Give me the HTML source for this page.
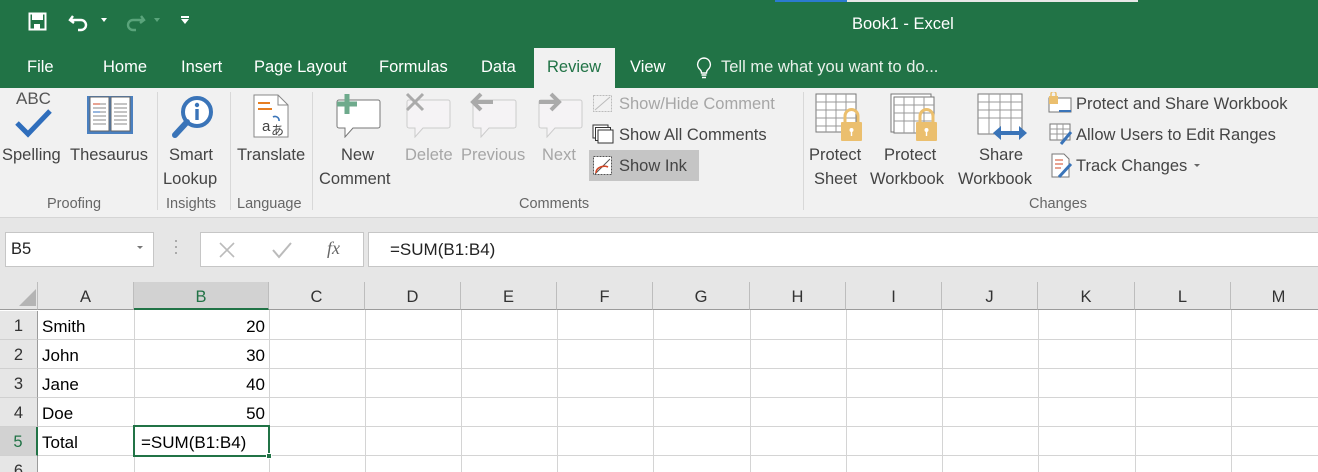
<!DOCTYPE html>
<html><head><meta charset="utf-8"><style>
*{margin:0;padding:0;box-sizing:border-box}
html{width:1318px;height:472px;overflow:hidden}
body{width:1318px;height:472px;overflow:hidden;background:#fff;font-family:"Liberation Sans",sans-serif;position:relative;color:#262626}
.a{position:absolute;white-space:nowrap}
.tb{background:#217346;position:absolute;left:0;top:0;width:1318px;height:88px}
.tab{position:absolute;top:58px;color:#fff;font-size:16.5px}
.rib{position:absolute;left:0;top:88px;width:1318px;height:130px;background:#f1f1f1;border-bottom:1px solid #d5d5d5}
.lbl{font-size:16.5px;color:#444;text-align:center;line-height:24px}
.dis{color:#a6a6a6}
.grp{font-size:14.5px;color:#666;position:absolute;top:196px}
.sep{position:absolute;top:92px;width:1px;height:118px;background:#d8d8d8}
.fb{position:absolute;left:0;top:218px;width:1318px;height:64px;background:#e6e6e6}
.hdr{position:absolute;top:282px;height:28px;background:#e6e6e6;border-right:1px solid #bdbdbd;border-bottom:1px solid #9b9b9b;font-size:16.5px;text-align:center;line-height:31px;color:#333}
.rh{position:absolute;left:0;width:38px;height:29px;background:#e6e6e6;border-bottom:1px solid #d0d0d0;border-right:1px solid #9b9b9b;font-size:16.5px;text-align:center;line-height:31px;color:#333;overflow:hidden}
.cell{position:absolute;font-size:17px;color:#000;line-height:31px}
</style></head><body>
<div class="tb"></div>
<div class="a" style="left:775px;top:0;width:72px;height:2px;background:#2b7bd0"></div>
<div class="a" style="left:847px;top:0;width:291px;height:2px;background:#e8e8e8"></div>
<svg class="a" style="left:28px;top:12px" width="20" height="20"><rect x="1.5" y="1.5" width="16" height="16" fill="none" stroke="#fff" stroke-width="2"/><rect x="4" y="2" width="11" height="6" fill="#fff"/><rect x="6" y="12" width="6" height="5" fill="#fff"/></svg>
<svg class="a" style="left:68px;top:10px" width="24" height="24"><path d="M5 6 L2 10 L6 13 M2.5 10 H13 a5 5 0 0 1 0 10 H10" fill="none" stroke="#fff" stroke-width="2.4"/></svg>
<div class="a" style="left:101px;top:18px;border:3.5px solid transparent;border-top:4px solid #fff"></div>
<svg class="a" style="left:122px;top:10px" width="24" height="24"><path d="M19 6 L22 10 L18 13 M21.5 10 H11 a5 5 0 0 0 0 10 H14" fill="none" stroke="#5aa47b" stroke-width="2.4"/></svg>
<div class="a" style="left:154px;top:18px;border:3.5px solid transparent;border-top:4px solid #5aa47b"></div>
<div class="a" style="left:181px;top:16px;width:8px;height:1.5px;background:#fff"></div>
<div class="a" style="left:181px;top:19px;border:4px solid transparent;border-top:5px solid #fff"></div>
<div class="a" style="left:852px;top:15px;color:#fff;font-size:16.5px">Book1 - Excel</div>
<div class="tab" style="left:27px">File</div>
<div class="tab" style="left:103px">Home</div>
<div class="tab" style="left:181px">Insert</div>
<div class="tab" style="left:254px">Page Layout</div>
<div class="tab" style="left:379px">Formulas</div>
<div class="tab" style="left:481px">Data</div>
<div class="a" style="left:534px;top:48px;width:81px;height:41px;background:#f1f1f1"></div>
<div class="tab" style="left:547px;color:#217346">Review</div>
<div class="tab" style="left:630px">View</div>
<svg class="a" style="left:694px;top:56px" width="20" height="24"><path d="M10 2a6.5 6.5 0 0 0-4 11.5c1 1 1.5 2 1.5 3.5h5c0-1.5.5-2.5 1.5-3.5A6.5 6.5 0 0 0 10 2z" fill="none" stroke="#fff" stroke-width="1.4"/><path d="M7.5 19h5M8 21.5h4" stroke="#fff" stroke-width="1.4"/></svg>
<div class="tab" style="left:721px;color:#e8f0ea">Tell me what you want to do...</div>

<div class="rib"></div>
<div class="a" style="left:16px;top:89px;font-size:17px;color:#555">ABC</div>
<svg class="a" style="left:14px;top:108px" width="40" height="30"><path d="M3 15 L14 26 L36 3" fill="none" stroke="#2f6ebc" stroke-width="5"/></svg>
<svg class="a" style="left:86px;top:94px" width="48" height="42"><rect x="1" y="2" width="46" height="38" fill="#4a80c0"/><rect x="4" y="3" width="19" height="34" fill="#fff" stroke="#666"/><rect x="25" y="3" width="19" height="34" fill="#fff" stroke="#666"/><g stroke="#888"><path d="M7 10h13M7 14h13M7 18h13M7 22h13M7 26h13M7 30h13M28 10h13M28 14h13M28 18h13M28 22h13M28 26h13M28 30h13"/></g><path d="M7 10h7" stroke="#d24726"/><path d="M7 18h7" stroke="#2f6ebc"/></svg>
<div class="a lbl" style="left:2px;top:143px">Spelling</div>
<div class="a lbl" style="left:70px;top:143px">Thesaurus</div>
<div class="sep" style="left:157px"></div>
<svg class="a" style="left:170px;top:94px" width="46" height="46"><circle cx="27" cy="18" r="14" fill="#fff" stroke="#3a74b8" stroke-width="4"/><circle cx="27" cy="11" r="2.2" fill="#3a74b8"/><rect x="25.3" y="15" width="3.4" height="11" fill="#3a74b8"/><path d="M17 28 L5 41" stroke="#3a74b8" stroke-width="6" stroke-linecap="round"/></svg>
<div class="a lbl" style="left:169px;top:143px">Smart</div>
<div class="a lbl" style="left:163px;top:167px">Lookup</div>
<div class="sep" style="left:230px"></div>
<svg class="a" style="left:252px;top:93px" width="42" height="46"><path d="M2 2h24l10 10v32H2z" fill="#fff" stroke="#888"/><path d="M26 2v10h10" fill="none" stroke="#888"/><path d="M6 10h12M6 16h14" stroke="#e67e22" stroke-width="2"/><text x="10" y="38" font-size="15" font-family="Liberation Sans,Noto Sans CJK JP,sans-serif" fill="#444">a</text><text x="19" y="42" font-size="13" font-family="Noto Sans CJK JP,sans-serif" fill="#444">あ</text><path d="M21 24 a4 4 0 0 1 6 4" fill="none" stroke="#3a74b8" stroke-width="1.6"/></svg>
<div class="a lbl" style="left:237px;top:143px">Translate</div>
<div class="sep" style="left:312px"></div>
<svg class="a" style="left:334px;top:92px" width="50" height="46"><path d="M5 8h39a2 2 0 0 1 2 2v24a2 2 0 0 1-2 2H19l-8 9v-9H5a2 2 0 0 1-2-2V10a2 2 0 0 1 2-2z" fill="#fff" stroke="#777"/><path d="M13 2v20M3 12h20" stroke="#6eaa8c" stroke-width="5"/></svg>
<div class="a lbl" style="left:341px;top:143px">New</div>
<div class="a lbl" style="left:319px;top:167px">Comment</div>
<svg class="a" style="left:404px;top:92px" width="50" height="46"><path d="M5 8h39a2 2 0 0 1 2 2v24a2 2 0 0 1-2 2H19l-8 9v-9H5a2 2 0 0 1-2-2V10a2 2 0 0 1 2-2z" fill="#f5f3f5" stroke="#ccc"/><path d="M3 2l16 16M19 2L3 18" stroke="#aaa" stroke-width="3"/></svg>
<div class="a lbl dis" style="left:405px;top:143px">Delete</div>
<svg class="a" style="left:470px;top:92px" width="50" height="46"><path d="M5 8h39a2 2 0 0 1 2 2v24a2 2 0 0 1-2 2H19l-8 9v-9H5a2 2 0 0 1-2-2V10a2 2 0 0 1 2-2z" fill="#f5f3f5" stroke="#ccc"/><path d="M3 10h20M11 2L3 10l8 8" fill="none" stroke="#aaa" stroke-width="4"/></svg>
<div class="a lbl dis" style="left:461px;top:143px">Previous</div>
<svg class="a" style="left:536px;top:92px" width="50" height="46"><path d="M5 8h39a2 2 0 0 1 2 2v24a2 2 0 0 1-2 2H19l-8 9v-9H5a2 2 0 0 1-2-2V10a2 2 0 0 1 2-2z" fill="#f5f3f5" stroke="#ccc"/><path d="M3 10h20M15 2l8 8-8 8" fill="none" stroke="#aaa" stroke-width="4"/></svg>
<div class="a lbl dis" style="left:542px;top:143px">Next</div>
<svg class="a" style="left:592px;top:94px" width="22" height="20"><rect x="1.5" y="1.5" width="18" height="16" fill="none" stroke="#bbb" stroke-dasharray="2 1"/><path d="M3 16L18 3" stroke="#bbb"/></svg>
<div class="a lbl dis" style="left:619px;top:92px">Show/Hide Comment</div>
<svg class="a" style="left:592px;top:124px" width="22" height="20"><rect x="1" y="1" width="15" height="13" fill="#fff" stroke="#333"/><rect x="3.5" y="3.5" width="15" height="13" fill="#fff" stroke="#333"/><rect x="6" y="6" width="15" height="13" fill="#fff" stroke="#333"/></svg>
<div class="a lbl" style="left:619px;top:123px">Show All Comments</div>
<div class="a" style="left:589px;top:150px;width:110px;height:31px;background:#c5c5c5"></div>
<svg class="a" style="left:592px;top:155px" width="22" height="22"><rect x="1.5" y="1.5" width="18" height="18" fill="#fff" stroke="#555" stroke-dasharray="2 1"/><path d="M3 19L18 4" stroke="#555"/><path d="M4 18c0-6 8-8 12-6" fill="none" stroke="#d24726" stroke-width="1.6"/></svg>
<div class="a lbl" style="left:619px;top:154px">Show Ink</div>
<div class="grp" style="left:47px">Proofing</div>
<div class="grp" style="left:166px">Insights</div>
<div class="grp" style="left:237px">Language</div>
<div class="grp" style="left:519px">Comments</div>
<div class="sep" style="left:803px"></div>
<svg class="a" style="left:815px;top:93px" width="50" height="50"><rect x="1" y="1" width="40" height="38" fill="#fff" stroke="#777"/><g stroke="#999"><path d="M1 9h40M1 17h40M1 25h40M1 33h40M11 1v38M21 1v38M31 1v38"/></g><rect x="26" y="29" width="21" height="19" rx="1" fill="#ebbf6e"/><path d="M30 29v-6a6.5 6.5 0 0 1 13 0v6" fill="none" stroke="#ebbf6e" stroke-width="3"/><circle cx="36.5" cy="37" r="2" fill="#fff"/><rect x="35.8" y="37" width="1.4" height="6" fill="#fff"/></svg>
<div class="a lbl" style="left:809px;top:143px">Protect</div>
<div class="a lbl" style="left:814px;top:167px">Sheet</div>
<svg class="a" style="left:890px;top:93px" width="50" height="50"><rect x="1" y="1" width="40" height="38" fill="#fff" stroke="#777"/><rect x="4" y="4" width="40" height="36" fill="#fff" stroke="#777"/><g stroke="#999"><path d="M4 12h40M4 20h40M4 28h40M14 4v36M24 4v36M34 4v36"/></g><rect x="26" y="29" width="21" height="19" rx="1" fill="#ebbf6e"/><path d="M30 29v-6a6.5 6.5 0 0 1 13 0v6" fill="none" stroke="#ebbf6e" stroke-width="3"/><circle cx="36.5" cy="37" r="2" fill="#fff"/><rect x="35.8" y="37" width="1.4" height="6" fill="#fff"/></svg>
<div class="a lbl" style="left:884px;top:143px">Protect</div>
<div class="a lbl" style="left:870px;top:167px">Workbook</div>
<svg class="a" style="left:977px;top:93px" width="52" height="50"><rect x="1" y="1" width="44" height="40" fill="#fff" stroke="#777"/><g stroke="#999"><path d="M1 9h44M1 17h44M1 25h44M12 1v40M23 1v40M34 1v40"/></g><path d="M22 40h22" stroke="#3a74b8" stroke-width="4"/><path d="M16 40l8-7v14zM50 40l-8-7v14z" fill="#3a74b8"/></svg>
<div class="a lbl" style="left:979px;top:143px">Share</div>
<div class="a lbl" style="left:958px;top:167px">Workbook</div>
<svg class="a" style="left:1048px;top:92px" width="26" height="24"><rect x="1" y="6" width="22" height="14" fill="#fff" stroke="#777"/><rect x="1" y="4" width="9" height="8" fill="#ebbf6e"/><path d="M3 4v-2a2.5 2.5 0 0 1 5 0v2" fill="none" stroke="#ebbf6e" stroke-width="1.5"/><path d="M11 19h12" stroke="#3a74b8" stroke-width="2"/></svg>
<div class="a lbl" style="left:1076px;top:92px">Protect and Share Workbook</div>
<svg class="a" style="left:1049px;top:122px" width="26" height="24"><rect x="1" y="2" width="20" height="16" fill="#fff" stroke="#777"/><path d="M1 7h20M1 12h20M8 2v16M14 2v16" stroke="#999"/><path d="M12 22l10-12" stroke="#3a74b8" stroke-width="3"/></svg>
<div class="a lbl" style="left:1076px;top:123px">Allow Users to Edit Ranges</div>
<svg class="a" style="left:1050px;top:153px" width="26" height="26"><path d="M2 1h12l5 5v18H2z" fill="#fff" stroke="#777"/><path d="M5 7h8M5 11h8M5 15h6" stroke="#d24726"/><path d="M9 24l12-13" stroke="#3a74b8" stroke-width="3"/></svg>
<div class="a lbl" style="left:1076px;top:154px">Track Changes</div>
<div class="a" style="left:1194px;top:164px;border:3px solid transparent;border-top:3.5px solid #666"></div>
<div class="grp" style="left:1029px">Changes</div>

<div class="fb"></div>
<div class="a" style="left:5px;top:232px;width:149px;height:35px;background:#fff;border:1px solid #c6c6c6"></div>
<div class="a" style="left:11px;top:240px;font-size:16.5px;color:#222">B5</div>
<div class="a" style="left:137px;top:246px;border:3px solid transparent;border-top:3.5px solid #777"></div>
<div class="a" style="left:175px;top:240px;width:2px;height:2px;background:#aaa;box-shadow:0 6px #aaa,0 12px #aaa"></div>
<div class="a" style="left:200px;top:232px;width:164px;height:35px;background:#fff;border:1px solid #c6c6c6"></div>
<svg class="a" style="left:218px;top:241px" width="18" height="18"><path d="M2 2l14 14M16 2L2 16" stroke="#bbb" stroke-width="1.6"/></svg>
<svg class="a" style="left:271px;top:241px" width="22" height="18"><path d="M2 9l6 7L20 2" fill="none" stroke="#bbb" stroke-width="2"/></svg>
<div class="a" style="left:327px;top:238px;font:italic 18px 'Liberation Serif',serif;color:#666">fx</div>
<div class="a" style="left:368px;top:232px;width:952px;height:35px;background:#fff;border:1px solid #c6c6c6"></div>
<div class="a" style="left:390px;top:240px;font-size:17px;color:#222">=SUM(B1:B4)</div>

<div class="a" style="left:0;top:282px;width:38px;height:28px;background:#e6e6e6;border-right:1px solid #bdbdbd;border-bottom:1px solid #9b9b9b"></div>
<div class="a" style="left:19px;top:289px;border-style:solid;border-width:0 0 17px 17px;border-color:transparent transparent #b4b4b4 transparent"></div>
<div class="hdr" style="left:38px;width:96px">A</div>
<div class="hdr" style="left:134px;width:135px;background:#d2d2d2;border-bottom:2px solid #217346;color:#217346">B</div>
<div class="hdr" style="left:269px;width:96px">C</div>
<div class="hdr" style="left:365px;width:96px">D</div>
<div class="hdr" style="left:461px;width:96px">E</div>
<div class="hdr" style="left:557px;width:96px">F</div>
<div class="hdr" style="left:653px;width:97px">G</div>
<div class="hdr" style="left:750px;width:96px">H</div>
<div class="hdr" style="left:846px;width:96px">I</div>
<div class="hdr" style="left:942px;width:96px">J</div>
<div class="hdr" style="left:1038px;width:97px">K</div>
<div class="hdr" style="left:1135px;width:96px">L</div>
<div class="hdr" style="left:1231px;width:96px">M</div>
<svg class="a" style="left:38px;top:310px" width="1280" height="162">
<g stroke="#d4d4d4" stroke-width="1">
<path d="M0 29.5h1280M0 58.5h1280M0 87.5h1280M0 116.5h1280M0 145.5h1280"/>
<path d="M96.5 0v162M231.5 0v162M327.5 0v162M423.5 0v162M519.5 0v162M615.5 0v162M712.5 0v162M808.5 0v162M904.5 0v162M1000.5 0v162M1097.5 0v162M1193.5 0v162"/>
</g></svg>
<div class="rh" style="top:311px">1</div>
<div class="rh" style="top:340px">2</div>
<div class="rh" style="top:369px">3</div>
<div class="rh" style="top:398px">4</div>
<div class="rh" style="top:427px;background:#d2d2d2;border-right:2px solid #217346;color:#217346">5</div>
<div class="rh" style="top:456px;height:16px;border-bottom:none">6</div>
<div class="cell" style="left:42px;top:311px">Smith</div>
<div class="cell" style="left:42px;top:340px">John</div>
<div class="cell" style="left:42px;top:369px">Jane</div>
<div class="cell" style="left:42px;top:398px">Doe</div>
<div class="cell" style="left:42px;top:427px">Total</div>
<div class="cell" style="left:134px;width:131px;text-align:right;top:311px">20</div>
<div class="cell" style="left:134px;width:131px;text-align:right;top:340px">30</div>
<div class="cell" style="left:134px;width:131px;text-align:right;top:369px">40</div>
<div class="cell" style="left:134px;width:131px;text-align:right;top:398px">50</div>
<div class="a" style="left:133px;top:425px;width:137px;height:32px;border:2px solid #217346;background:#fff"></div>
<div class="cell" style="left:141px;top:427px">=SUM(B1:B4)</div>
<div class="a" style="left:266px;top:453px;width:6px;height:6px;background:#217346;border:1px solid #fff"></div>
</body></html>
